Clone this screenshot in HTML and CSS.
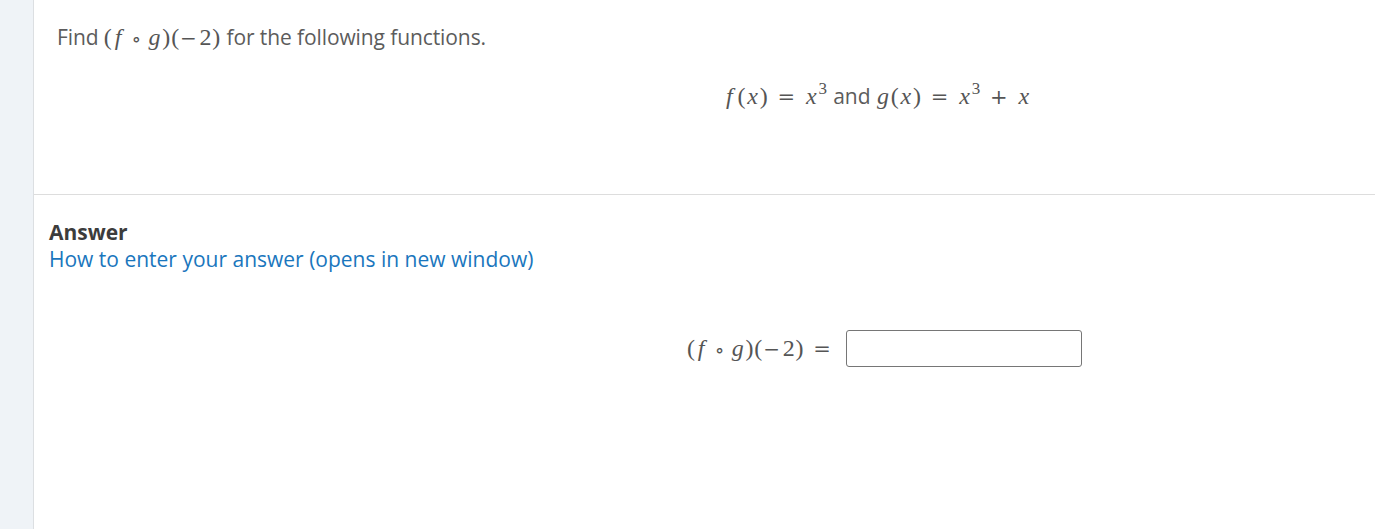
FILE: index.html
```html
<!DOCTYPE html>
<html>
<head>
<meta charset="utf-8">
<link rel="stylesheet" href="styles.css">
</head>
<body>
<div class="page">
  <aside class="sidebar"></aside>
  <main class="main">
    <section class="question">
      <p class="prompt">Find <span class="math">(<i class="vf">f</i><span class="op">∘</span><i class="v">g</i>)(<span class="neg">−</span>2)</span> for the following functions.</p>
      <div class="display">
        <span class="math"><i class="vf">f</i>(<i class="v">x</i>)<span class="rel">=</span><i class="v">x</i><sup>3</sup></span> and <span class="math"><i class="v">g</i>(<i class="v">x</i>)<span class="rel">=</span><i class="v">x</i><sup>3</sup><span class="bin">+</span><i class="v">x</i></span>
      </div>
    </section>
    <section class="answer">
      <h2 class="answer-title">Answer</h2>
      <a class="help-link" href="#">How to enter your answer (opens in new window)</a>
      <div class="answer-row">
        <span class="math">(<i class="vf">f</i><span class="op">∘</span><i class="v">g</i>)(<span class="neg">−</span>2)<span class="rel">=</span></span>
        <input class="answer-input" type="text" aria-label="answer">
      </div>
    </section>
  </main>
</div>
</body>
</html>
```

FILE: styles.css
```css
html, body {
  margin: 0;
  padding: 0;
  background: #ffffff;
  overflow: hidden;
}
body {
  font-family: "Open Sans", "Liberation Sans", sans-serif;
  color: #555555;
}
.page {
  display: flex;
  min-height: 529px;
}
.sidebar {
  width: 33px;
  flex: none;
  background: #eff3f7;
  border-right: 1px solid #dcdfe2;
}
.main {
  flex: 1;
  display: flex;
  flex-direction: column;
}
.question {
  height: 194px;
  border-bottom: 1px solid #dddddd;
  padding: 0 0 0 23px;
}
.prompt {
  margin: 0;
  padding-top: 23px;
  font-size: 21px;
  line-height: 28px;
  color: #5c5c5c;
  letter-spacing: -0.1px;
}
.math {
  font-family: "Liberation Serif", "Times New Roman", serif;
  font-size: 24px;
  color: #555555;
  letter-spacing: 0.8px;
}
.math i {
  font-style: italic;
}
.v {
  padding: 0 1px;
}
.vf {
  padding: 0 4px 0 2px;
}
.neg {
  font-family: "DejaVu Serif", serif;
  font-size: 20px;
  padding-right: 2px;
}
.math sup {
  font-size: 17px;
  line-height: 0;
  vertical-align: 10px;
}
.op {
  font-family: "DejaVu Sans", sans-serif;
  font-weight: 700;
  margin: 0 5px;
  font-size: 17px;
}
.rel {
  font-family: "DejaVu Serif", serif;
  font-size: 21px;
  margin: 0 9px;
}
.bin {
  font-family: "DejaVu Serif", serif;
  font-size: 21px;
  margin: 0 9px;
}
.display {
  padding-left: 667px;
  margin-top: 28px;
  font-size: 21px;
  line-height: 30px;
  color: #5c5c5c;
}
.answer {
  padding: 24px 0 0 15px;
}
.answer-title {
  margin: 0;
  font-size: 21px;
  line-height: 26px;
  font-weight: 700;
  color: #3c3c3c;
}
.help-link {
  display: inline-block;
  font-size: 21px;
  line-height: 28px;
  color: #1a76bd;
  text-decoration: none;
}
.answer-row {
  display: flex;
  align-items: center;
  margin-top: 57px;
  padding-left: 638px;
}
.answer-input {
  box-sizing: border-box;
  width: 236px;
  height: 37px;
  margin-left: 5px;
  border: 1px solid #767676;
  border-radius: 3px;
  background: #ffffff;
  padding: 0 8px;
  font-size: 16px;
}
```
